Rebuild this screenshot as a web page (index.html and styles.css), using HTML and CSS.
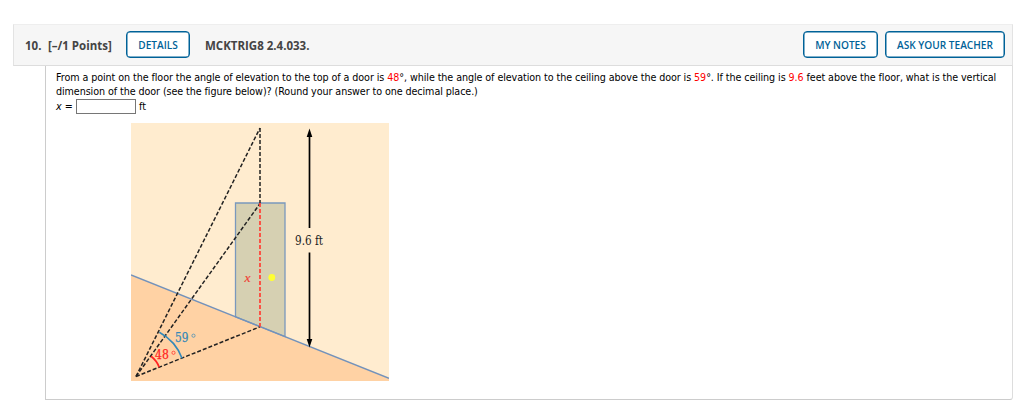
FILE: index.html
```html
<!DOCTYPE html>
<html lang="en">
<head>
    <meta charset="UTF-8">
    <meta name="viewport" content="width=device-width, initial-scale=1.0">
    <title>MCKTRIG8 2.4.033.</title>
    <link rel="stylesheet" href="styles.css">
</head>
<body>
    <div class="question">
        <header class="question-header">
            <span class="number">10.</span>
            <span class="points">[–/1 Points]</span>
            <button class="btn btn-details">DETAILS</button>
            <span class="code">MCKTRIG8 2.4.033.</span>
            <button class="btn btn-notes">MY NOTES</button>
            <button class="btn btn-teacher">ASK YOUR TEACHER</button>
        </header>

        <div class="question-body">
            <div class="line">From a point on the floor the angle of elevation to the top of a door is <span class="red">48</span>°, while the angle of elevation to the ceiling above the door is <span class="red">59</span>°. If the ceiling is <span class="red">9.6</span> feet above the floor, what is the vertical</div>
            <div class="line">dimension of the door (see the figure below)? (Round your answer to one decimal place.)</div>
            <div class="answer">
                <label for="answer"><i>x</i> =</label>
                <input type="text" id="answer">
                <span>ft</span>
            </div>

            <svg class="figure" viewBox="0 0 258 258" width="258" height="258">
                <rect width="258" height="258" fill="#ffeccf"/>
                <path d="M0 152 L258 255.3 V258 H0 Z" fill="#ffd2a4"/>
                <!-- door -->
                <path d="M104.5 80 H154 V213.5 L104.5 193.8 Z" fill="#d6d0b2" stroke="#7a98bd" stroke-width="1.3"/>
                <path d="M0 152 L258 255.3" stroke="#7392bb" stroke-width="1.5"/>
                <circle cx="140.8" cy="154.5" r="3.4" fill="#ffff32"/>
                <!-- sight lines -->
                <g class="dashed">
                    <path d="M5 253.5 L129 5"/>
                    <path d="M5 253.5 L129 80.5"/>
                    <path d="M5 253.5 L129 203.8"/>
                    <path d="M129 5 V80"/>
                    <path d="M129 80 V203.8" class="height"/>
                </g>
                <!-- ceiling height -->
                <path d="M178.5 12 V105 M178.5 129.5 V218" stroke="#000" stroke-width="1.7"/>
                <path d="M178.5 5.5 L181.3 14 H175.7 Z M178.5 224.5 L181.3 216 H175.7 Z" fill="#000"/>
                <!-- angles -->
                <path d="M28.3 209.3 A49.5 49.5 0 0 1 51 235.2" class="arc" stroke="#3588b8"/>
                <path d="M20 233.3 A25 25 0 0 1 28.2 244.2" class="arc" stroke="#f22"/>
                <text x="164" y="122" fill="#222" textLength="28" lengthAdjust="spacingAndGlyphs">9.6 ft</text>
                <text x="113.5" y="159" fill="#f04438" class="variable">x</text>
                <text x="44" y="219" fill="#3588b8" stroke="#3588b8" stroke-width="0.25" textLength="13.4" lengthAdjust="spacingAndGlyphs">59</text>
                <text x="24" y="236" fill="#f22" stroke="#f22" stroke-width="0.25" textLength="13.8" lengthAdjust="spacingAndGlyphs">48</text>
                <circle cx="62.5" cy="212.7" r="1.6" class="degree" stroke="#3588b8"/>
                <circle cx="42.5" cy="229.8" r="1.6" class="degree" stroke="#f22"/>
            </svg>
        </div>
    </div>
</body>
</html>
```
FILE: styles.css
```css
* {
    box-sizing: border-box;
}

body {
    margin: 0;
    background-color: #fff;
    font-family: Verdana, 'DejaVu Sans', sans-serif;
}

.question {
    width: 1000px;
    margin: 24px 0 0 13px;
}

.question-header {
    display: flex;
    align-items: center;
    height: 42px;
    padding: 0 7px 1px 11px;
    background-color: #f6f6f6;
    border: 1px solid #e3e3e3;
    border-top-color: #eee;
    border-bottom-color: #ddd;
    color: #444;
    font-family: 'Open Sans', sans-serif;
    font-size: 11.5px;
    font-weight: bold;
    white-space: nowrap;
}

.question-header span {
    padding-top: 1px;
}

.number {
    width: 23px;
}

.points {
    width: 78px;
}

.btn {
    height: 27px;
    padding: 0;
    background-color: #fff;
    border: 1px solid #006298;
    border-radius: 4px;
    box-shadow: inset 0 0 0 0.5px #006298;
    color: #006298;
    font-family: 'Open Sans', sans-serif;
    font-size: 10.1px;
    font-weight: 600;
    cursor: pointer;
}

.btn-details {
    width: 64px;
    margin-right: 15px;
}

.btn-notes {
    width: 75px;
    margin-left: auto;
    margin-right: 7px;
}

.btn-teacher {
    width: 120px;
}

.question-body {
    height: 334px;
    margin-left: 32px;
    padding: 5px 0 0 10px;
    border: 1px solid #ccc;
    border-top: none;
    border-right-color: #ddd;
    border-bottom-right-radius: 3px;
    font-size: 9.6px;
    color: #000;
}

.line {
    height: 14px;
    line-height: 14px;
    letter-spacing: -0.08px;
    white-space: nowrap;
}

.red {
    color: #f00;
}

.answer {
    display: flex;
    align-items: center;
    height: 15px;
}

.answer label {
    width: 20px;
}

.answer input {
    width: 60px;
    height: 15px;
    margin-right: 3px;
    padding: 0;
    border: 1px solid #767676;
}

.figure {
    display: block;
    margin: 9px 0 0 75px;
    font-family: 'DejaVu Serif', serif;
    font-size: 12.3px;
}

.variable {
    font-family: 'Liberation Serif', serif;
    font-size: 13.5px;
    font-style: italic;
    stroke: #f04438;
    stroke-width: 0.2;
}

.dashed path {
    stroke: #222;
    stroke-width: 1.5;
    stroke-dasharray: 4 2;
}

.dashed .height {
    stroke: #ff453a;
    stroke-width: 1.8;
}

.arc {
    fill: none;
    stroke-width: 1.7;
}

.degree {
    fill: none;
    stroke-width: 0.7;
}
```
